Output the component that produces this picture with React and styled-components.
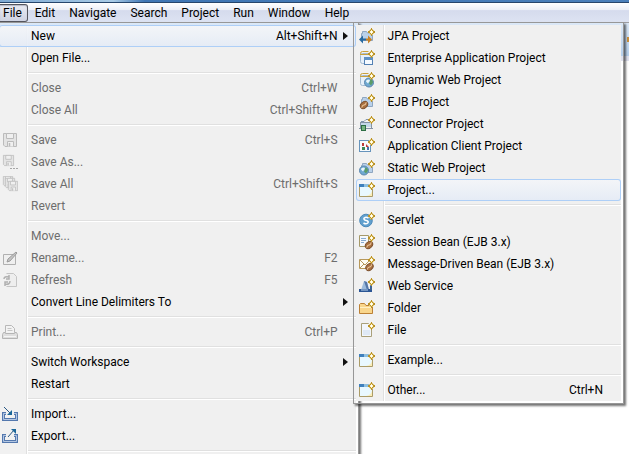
import React from 'react';
import styled, { createGlobalStyle, css } from 'styled-components';

const GlobalStyle = createGlobalStyle`
    * {
        box-sizing: border-box;
    }

    body {
        margin: 0;
        background: #ffffff;
        font-family: Roboto, "Open Sans", sans-serif;
        font-size: 12px;
        line-height: 16px;
        color: #000000;
    }

    button {
        font: inherit;
        color: inherit;
    }
`;

const Window = styled.div`
    height: 100vh;
    display: flex;
    flex-direction: column;
    overflow: hidden;
`;

const TitleEdge = styled.div`
    flex: none;
    height: 3px;
    border-bottom: 1px solid #27466c;
    background: linear-gradient(90deg, #7fa9d2, #a9cbe6 18%, #3f76b4 23%, #4a7fba);
`;

const MenuBar = styled.nav`
    flex: none;
    display: flex;
    height: 20px;
    padding-top: 1px;
    border-bottom: 1px solid #a0a0a4;
    background: linear-gradient(#ffffff, #eceff7 36%, #d5dbed 40%, #dde3f2);
`;

const MenuBarButton = styled.button`
    height: 18px;
    padding: 0 6px;
    border: 1px solid transparent;
    background: transparent;
    line-height: 16px;

    &:first-child {
        padding: 0 5px 0 3px;
        border-left: none;
    }

    ${({ $open }) => $open && css`
        border-color: #55565e;
        border-radius: 0 3px 3px 0;
        background: linear-gradient(#e9ebf2, #cfd3e2);
        box-shadow: inset 0 1px 1px #b4b7c6;
    `}
`;

const Workspace = styled.main`
    position: relative;
    flex: 1;
    min-height: 0;
`;

const Toolbar = styled.div`
    display: flex;
    align-items: center;
    justify-content: flex-end;
    height: 38px;
    border-bottom: 5px solid #dfe1ee;
    background: linear-gradient(#dbe8f7, #b5cfeb);

    &::after {
        content: "";
        width: 2px;
        height: 5px;
        background: #c98f3c;
    }
`;

// 열린 메뉴들은 작업 영역 위에 떠 있다
const MenuLayer = styled.div`
    position: absolute;
    inset: -1px 0 0;
    display: flex;
    align-items: flex-start;
`;

const Menu = styled.div`
    flex: none;
    width: ${({ $width }) => $width};
    margin-left: ${({ $shift }) => $shift};
    padding: 2px;
    border: 1px solid #979797;
    background: linear-gradient(90deg, #f1f1f1 27px, #e0e0e0 27px, #e0e0e0 28px, #ffffff 28px, #ffffff 29px, #f0f0f0 29px) no-repeat content-box #f0f0f0;
    background-position: 0 0;
    box-shadow: 2px 2px 2px rgba(0, 0, 0, 0.55);
`;

const MenuItem = styled.button`
    display: flex;
    align-items: center;
    width: 100%;
    height: 22px;
    padding: 0 8px 0 3px;
    border: none;
    border-radius: 3px;
    background: transparent;
    text-align: left;
    white-space: nowrap;

    &:disabled {
        color: #6d6d6d;
    }

    ${({ $active }) => $active && css`
        background: linear-gradient(rgba(244, 246, 249, 0.9), rgba(228, 235, 246, 0.9));
        box-shadow: inset 0 0 0 1px #aecff7;
    `}
`;

const IconSlot = styled.span`
    flex: none;
    display: flex;
    width: 16px;
    height: 16px;
    margin-right: 13px;
`;

const Label = styled.span`
    flex: 1;
`;

const Arrow = styled.span`
    width: 10px;
    display: flex;
    justify-content: flex-end;
`;

const Separator = styled.hr`
    height: 2px;
    margin: 3px 0 3px 29px;
    border: none;
    border-top: 1px solid #e0e0e0;
    border-bottom: 1px solid #ffffff;
`;

const Svg = ({ children }) => (
    <svg width="16" height="16" viewBox="0 0 16 16" aria-hidden="true">{children}</svg>
);

// 새로 만들기 표시 (노란 별)
const Star = () => (
    <>
        <path d="M12 0h1v2h1v1h2v2h-2v1h-1v2h-1V6h-1V5H9V3h2V2h1z" fill="#bb9226" />
        <path d="M12 2h1v1h1v2h-1v1h-1V5h-1V3h1z" fill="#fff6c8" />
        <path d="M12 3h1v2h-1z" fill="#ffffff" />
        <path d="M11 1h1v1h-1zM13 1h1v1h-1zM10 2h1v1h-1zM14 2h1v1h-1zM10 5h1v1h-1zM14 5h1v1h-1zM11 6h1v1h-1zM13 6h1v1h-1z" fill="#dcc377" />
    </>
);

const BlueFolder = () => (
    <path d="M2.500 12.500v-7h1v-2h4l1 1.500h5v7.500z" fill="#b9d1ea" stroke="#8fa6c0" />
);

const YellowBox = () => (
    <>
        <rect x="1.500" y="3.500" width="11" height="10" rx="2" fill="#e6f0fa" stroke="#a3bad0" />
        <path d="M1.500 5V3.500q0-2 2-2h6M2 4.500h9" fill="none" stroke="#c8a13c" />
    </>
);

const Bean = ({ x, y }) => (
    <g transform={`translate(${x} ${y}) rotate(-40)`}>
        <ellipse rx="4" ry="3" fill="#a9703f" stroke="#7d4f2b" />
        <path d="M-3.500 .5Q-1-1 0 0t3.500-.5" fill="none" stroke="#edc9a0" />
    </g>
);

const Globe = ({ x, y }) => (
    <g transform={`translate(${x} ${y})`}>
        <circle r="4.500" fill="#6fa9d2" stroke="#5c86ad" />
        <path d="M1-3Q4-3 4 0L2 3 0 1l1-2z" fill="#5b9c68" />
        <path d="M-3-1q0-2 3-2l1 1-2 3z" fill="#e9f6fa" />
    </g>
);

const Disk = ({ x = 0, y = 0, size = 14 }) => (
    <g transform={`translate(${x} ${y}) scale(${size / 14})`} stroke="#bcbcbc" fill="#f0f0f0">
        <path d="M.5 .5h13v13H2l-1.500-1.500z" fill="#e4e4e4" />
        <path d="M3.500 .5h7v5h-7z" />
        <path d="M4.500 13.500v-5h6v5" />
        <path d="M6.500 10v3.500" strokeWidth="1.500" />
    </g>
);

const icons = {
    jpa: (
        <Svg>
            <BlueFolder />
            <path d="M0 11.500l4-4v3h3v2H4v3z" fill="#286aa0" />
            <path d="M13 11.500l-4-4v3H7v2h2v3z" fill="#c98224" />
            <Star />
        </Svg>
    ),
    enterprise: (
        <Svg>
            <YellowBox />
            <rect x="5.500" y="7.500" width="8" height="7" fill="#f5faff" stroke="#5481b4" />
            <path d="M5 7h9v3H5z" fill="#5e91c4" />
            <Star />
        </Svg>
    ),
    dynamicWeb: <Svg><YellowBox /><Globe x="10" y="10.500" /><Star /></Svg>,
    ejb: <Svg><BlueFolder /><Bean x="5" y="11" /><Star /></Svg>,
    connector: (
        <Svg>
            <path d="M2 5.500h3l2-2h3" fill="none" stroke="#8095ad" />
            <path d="M2 6h11v5H2z" fill="#c4d8e9" />
            <path d="M0 12.500h14M1 6.500h12M1.500 7v5M12.500 7v5" stroke="#8594a5" />
            <rect x="2.500" y="9.500" width="4" height="5" fill="#79b583" stroke="#2c6d43" />
            <Star />
        </Svg>
    ),
    client: (
        <Svg>
            <rect x=".5" y="2.500" width="11" height="11" fill="#f6fafc" stroke="#6794bc" />
            <path d="M3 5h2v3H3zM7 6l3 3H7z" fill="#bd3d3a" />
            <path d="M3 9h3v3H3z" fill="#3d8658" />
            <path d="M8 9h2v3H8z" fill="#4072a9" />
            <Star />
        </Svg>
    ),
    staticWeb: <Svg><BlueFolder /><Globe x="5" y="10.500" /><Star /></Svg>,
    wizard: (
        <Svg>
            <path d="M.5 3.500h13v11H.5z" fill="#e9f8ff" stroke="#ab9c68" />
            <path d="M0 2h9v3H0z" fill="#3f80bd" />
            <path d="M5 2h5v3H5z" fill="#90bfdf" />
            <path d="M13 8q0 5-6 6h6z" fill="#fbedb8" />
            <Star />
        </Svg>
    ),
    servlet: (
        <Svg>
            <circle cx="7" cy="8.500" r="6.300" fill="#61a0ce" stroke="#4c89b9" />
            <path d="M9.500 6Q7 4.500 5.200 6q-1 1.700 2 2.500t1.500 2.500Q7 12.500 4.500 11" fill="none" stroke="#fff" strokeWidth="1.600" />
            <Star />
        </Svg>
    ),
    sessionBean: (
        <Svg>
            <path d="M.5 1.500h9v11h-9z" fill="#f5f9fd" stroke="#a69a6a" />
            <path d="M2 4.500h5M2 6.500h5M2 8.500h3" stroke="#88abd0" />
            <Bean x="10" y="11" />
            <Star />
        </Svg>
    ),
    messageBean: (
        <Svg>
            <path d="M.5 3.500h12v9H.5z" fill="#fffdf3" stroke="#b7985a" />
            <path d="M1 4l5 5 5-5M1 12l4-4" fill="none" stroke="#b7985a" />
            <Bean x="10.500" y="11" />
            <Star />
        </Svg>
    ),
    webService: (
        <Svg>
            <path d="M2 12L5 3l3 1 2 8z" fill="#9dbbdc" />
            <path d="M5 3l3 9h2L8 4z" fill="#5577a8" />
            <path d="M0 12.500h13" stroke="#2c5695" strokeWidth="3" />
            <path d="M2 12h7" stroke="#bcd5ed" />
            <path d="M11 7v5h2V8z" fill="#3c6392" />
            <Star />
        </Svg>
    ),
    folder: (
        <Svg>
            <path d="M.5 13.500v-9l1-1h4l1.500 2h6.500v8z" fill="#f9d68c" stroke="#bc8136" />
            <path d="M1 7.500h12" stroke="#fff0c4" />
            <Star />
        </Svg>
    ),
    file: (
        <Svg>
            <path d="M2.500 1.500h7l3 3v10h-10z" fill="#f2f6fc" stroke="#aaa07a" />
            <path d="M4 8h7v5H4z" fill="#dfe9f6" />
            <Star />
        </Svg>
    ),
    save: <Svg><Disk x={1} y={1} /></Svg>,
    saveAs: (
        <Svg>
            <Disk x={1} y={1} size={11} />
            <path d="M8 14h2v1H8zM11 14h2v1h-2zM14 14h2v1h-2z" fill="#a6a6a6" />
        </Svg>
    ),
    saveAll: <Svg><Disk x={1} y={0} size={10} /><Disk x={3} y={2} size={10} /><Disk x={6} y={5} size={10} /></Svg>,
    rename: (
        <Svg>
            <path d="M1.500 4.500h12v10h-12z" fill="#efefef" stroke="#b0b0b0" />
            <path d="M5 12l1-3 8-7 1 1-7 8z" fill="#c3c3c3" stroke="#9c9c9c" />
        </Svg>
    ),
    refresh: (
        <Svg>
            <path d="M4.500 1.500h7l3 3v10h-10" fill="#eeeeee" stroke="#c5c5c5" />
            <path d="M2 7q0-3 5-2M7 3v4H4M8 9q0 4-5 3M3 14v-4h3" fill="none" stroke="#b0b0b0" strokeWidth="1.500" />
        </Svg>
    ),
    print: (
        <Svg>
            <path d="M3.500 8V1.500h6l3 3V8" fill="#f3f3f3" stroke="#b8b8b8" />
            <path d="M5.500 4.500h4M5.500 6.500h5" stroke="#c5c5c5" />
            <path d="M1.500 8.500h2v1h9v-1h2l1 2v4H.5v-4z" fill="#dedede" stroke="#b4b4b4" />
            <path d="M2 12.500h12" stroke="#f5f5f5" />
        </Svg>
    ),
    importIcon: (
        <Svg>
            <path d="M4 7.500H1.500v6h13v-6H12" fill="none" stroke="#5478ae" strokeWidth="3" />
            <path d="M4 7.500H1.500v6h13v-6H12" fill="none" stroke="#b4c7e2" />
            <path d="M2 1l7 7" stroke="#2a5884" />
            <path d="M10 4v5H5z" fill="#1c6799" />
        </Svg>
    ),
    exportIcon: (
        <Svg>
            <path d="M4 7.500H1.500v6h13v-6H12" fill="none" stroke="#5478ae" strokeWidth="3" />
            <path d="M4 7.500H1.500v6h13v-6H12" fill="none" stroke="#b4c7e2" />
            <path d="M6 9l6-7" stroke="#2a5884" />
            <path d="M9 1h5v5z" fill="#1c6799" />
        </Svg>
    ),
};

const menuBar = ['File', 'Edit', 'Navigate', 'Search', 'Project', 'Run', 'Window', 'Help'];

// 그룹 사이에 구분선이 들어간다
const fileMenu = [
    [
        { label: 'New', shortcut: 'Alt+Shift+N', submenu: true, active: true },
        { label: 'Open File...' },
    ],
    [
        { label: 'Close', shortcut: 'Ctrl+W', disabled: true },
        { label: 'Close All', shortcut: 'Ctrl+Shift+W', disabled: true },
    ],
    [
        { label: 'Save', shortcut: 'Ctrl+S', icon: 'save', disabled: true },
        { label: 'Save As...', icon: 'saveAs', disabled: true },
        { label: 'Save All', shortcut: 'Ctrl+Shift+S', icon: 'saveAll', disabled: true },
        { label: 'Revert', disabled: true },
    ],
    [
        { label: 'Move...', disabled: true },
        { label: 'Rename...', shortcut: 'F2', icon: 'rename', disabled: true },
        { label: 'Refresh', shortcut: 'F5', icon: 'refresh', disabled: true },
        { label: 'Convert Line Delimiters To', submenu: true },
    ],
    [{ label: 'Print...', shortcut: 'Ctrl+P', icon: 'print', disabled: true }],
    [
        { label: 'Switch Workspace', submenu: true },
        { label: 'Restart' },
    ],
    [
        { label: 'Import...', icon: 'importIcon' },
        { label: 'Export...', icon: 'exportIcon' },
    ],
    [],
];

const newMenu = [
    [
        { label: 'JPA Project', icon: 'jpa' },
        { label: 'Enterprise Application Project', icon: 'enterprise' },
        { label: 'Dynamic Web Project', icon: 'dynamicWeb' },
        { label: 'EJB Project', icon: 'ejb' },
        { label: 'Connector Project', icon: 'connector' },
        { label: 'Application Client Project', icon: 'client' },
        { label: 'Static Web Project', icon: 'staticWeb' },
        { label: 'Project...', icon: 'wizard', active: true },
    ],
    [
        { label: 'Servlet', icon: 'servlet' },
        { label: 'Session Bean (EJB 3.x)', icon: 'sessionBean' },
        { label: 'Message-Driven Bean (EJB 3.x)', icon: 'messageBean' },
        { label: 'Web Service', icon: 'webService' },
        { label: 'Folder', icon: 'folder' },
        { label: 'File', icon: 'file' },
    ],
    [{ label: 'Example...', icon: 'wizard' }],
    [{ label: 'Other...', icon: 'wizard', shortcut: 'Ctrl+N' }],
];

const MenuGroups = ({ groups }) => groups.map((items, index) => (
    <React.Fragment key={index}>
        {index > 0 && <Separator />}
        {items.map((item) => (
            <MenuItem
                key={item.label}
                role="menuitem"
                disabled={item.disabled}
                $active={item.active}
                aria-haspopup={item.submenu ? 'menu' : undefined}
            >
                <IconSlot>{icons[item.icon]}</IconSlot>
                <Label>{item.label}</Label>
                {item.shortcut && <span>{item.shortcut}</span>}
                <Arrow>
                    {item.submenu && (
                        <svg width="5" height="8" viewBox="0 0 5 8" aria-hidden="true">
                            <path d="M0 0l5 4-5 4z" fill="#111" />
                        </svg>
                    )}
                </Arrow>
            </MenuItem>
        ))}
    </React.Fragment>
));

const App = () => {
    return (
        <>
            <GlobalStyle />
            <Window>
                <TitleEdge />
                <MenuBar>
                    {menuBar.map((name) => (
                        <MenuBarButton key={name} $open={name === 'File'}>{name}</MenuBarButton>
                    ))}
                </MenuBar>
                <Workspace>
                    <Toolbar />
                    <MenuLayer>
                        <Menu role="menu" aria-label="File" $width="calc(57% + 4px)" $shift="-4px">
                            <MenuGroups groups={fileMenu} />
                        </Menu>
                        <Menu role="menu" aria-label="New" $width="calc(43% + 1px)" $shift="-6px">
                            <MenuGroups groups={newMenu} />
                        </Menu>
                    </MenuLayer>
                </Workspace>
            </Window>
        </>
    );
};

export default App;
